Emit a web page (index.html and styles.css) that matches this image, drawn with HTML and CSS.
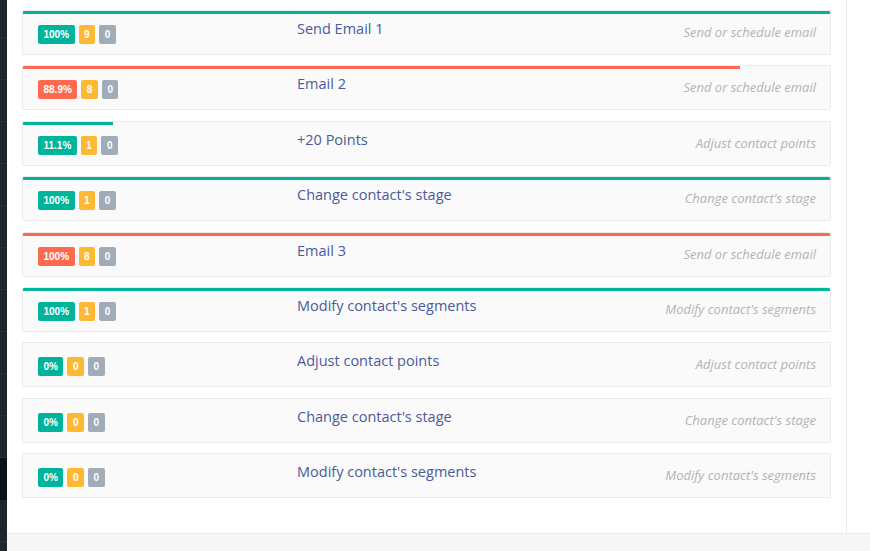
FILE: index.html
```html
<!DOCTYPE html>
<html>
<head>
<meta charset="utf-8">
<link rel="stylesheet" href="styles.css">
</head>
<body>
<div class="app">
  <nav class="sidebar">
    <div class="nav-item first"></div>
    <div class="nav-item"></div>
    <div class="nav-item"></div>
    <div class="nav-item"></div>
    <div class="nav-item"></div>
    <div class="nav-item"></div>
    <div class="nav-item"></div>
    <div class="nav-item"></div>
    <div class="nav-item"></div>
    <div class="nav-item"></div>
    <div class="nav-item"></div>
    <div class="nav-item active"></div>
    <div class="nav-item"></div>
  </nav>
  <div class="content">
    <div class="columns">
      <main class="panel">
        <div class="event">
          <div class="bar bar-success" style="width:100%"></div>
          <div class="event-body">
            <div class="labels"><span class="label success">100%</span><span class="label warning">9</span><span class="label gray">0</span></div>
            <div class="title">Send Email 1</div>
            <div class="desc">Send or schedule email</div>
          </div>
        </div>
        <div class="event">
          <div class="bar bar-danger" style="width:88.9%"></div>
          <div class="event-body">
            <div class="labels"><span class="label danger">88.9%</span><span class="label warning">8</span><span class="label gray">0</span></div>
            <div class="title">Email 2</div>
            <div class="desc">Send or schedule email</div>
          </div>
        </div>
        <div class="event">
          <div class="bar bar-success" style="width:11.1%"></div>
          <div class="event-body">
            <div class="labels"><span class="label success">11.1%</span><span class="label warning">1</span><span class="label gray">0</span></div>
            <div class="title">+20 Points</div>
            <div class="desc">Adjust contact points</div>
          </div>
        </div>
        <div class="event">
          <div class="bar bar-success" style="width:100%"></div>
          <div class="event-body">
            <div class="labels"><span class="label success">100%</span><span class="label warning">1</span><span class="label gray">0</span></div>
            <div class="title">Change contact's stage</div>
            <div class="desc">Change contact's stage</div>
          </div>
        </div>
        <div class="event">
          <div class="bar bar-danger" style="width:100%"></div>
          <div class="event-body">
            <div class="labels"><span class="label danger">100%</span><span class="label warning">8</span><span class="label gray">0</span></div>
            <div class="title">Email 3</div>
            <div class="desc">Send or schedule email</div>
          </div>
        </div>
        <div class="event">
          <div class="bar bar-success" style="width:100%"></div>
          <div class="event-body">
            <div class="labels"><span class="label success">100%</span><span class="label warning">1</span><span class="label gray">0</span></div>
            <div class="title">Modify contact's segments</div>
            <div class="desc">Modify contact's segments</div>
          </div>
        </div>
        <div class="event">
          <div class="bar" style="width:0%"></div>
          <div class="event-body">
            <div class="labels"><span class="label success">0%</span><span class="label warning">0</span><span class="label gray">0</span></div>
            <div class="title">Adjust contact points</div>
            <div class="desc">Adjust contact points</div>
          </div>
        </div>
        <div class="event">
          <div class="bar" style="width:0%"></div>
          <div class="event-body">
            <div class="labels"><span class="label success">0%</span><span class="label warning">0</span><span class="label gray">0</span></div>
            <div class="title">Change contact's stage</div>
            <div class="desc">Change contact's stage</div>
          </div>
        </div>
        <div class="event">
          <div class="bar" style="width:0%"></div>
          <div class="event-body">
            <div class="labels"><span class="label success">0%</span><span class="label warning">0</span><span class="label gray">0</span></div>
            <div class="title">Modify contact's segments</div>
            <div class="desc">Modify contact's segments</div>
          </div>
        </div>
      </main>
      <aside class="side"></aside>
    </div>
    <footer class="footer"></footer>
  </div>
</div>
</body>
</html>
```

FILE: styles.css
```css
* { box-sizing: border-box; }
html, body { margin: 0; padding: 0; height: 100%; background: #fff; }
body { font-family: "Open Sans", "Liberation Sans", sans-serif; overflow: hidden; }

.app { display: flex; height: 551px; }

.sidebar {
  width: 7px;
  flex: none;
  background: #1f252d;
  display: flex;
  flex-direction: column;
  overflow: hidden;
}
.nav-item {
  flex: none;
  height: 42px;
  border-bottom: 1px solid #2b323b;
}
.nav-item.first { height: 38px; }
.nav-item.active { background: #0e1317; border-bottom-color: #0e1317; }

.content {
  flex: 1;
  display: flex;
  flex-direction: column;
  min-width: 0;
}
.columns { display: flex; height: 533px; }
.panel {
  width: 840px;
  flex: none;
  border-right: 1px solid #ebebeb;
  padding: 10px 15px 0 15px;
}
.side { flex: 1; background: #fff; }

.footer {
  flex: 1;
  background: #f7f7f7;
  border-top: 1px solid #ebebeb;
}

.event {
  height: 45px;
  margin-bottom: 10.4px;
  background: #fafafa;
  border: 1px solid #ebebeb;
  border-radius: 2px;
  overflow: hidden;
}
.bar { height: 3px; }
.bar-success { background: #00b49c; }
.bar-danger { background: #fd6a50; }

.event-body {
  display: grid;
  grid-template-columns: 259px 1fr auto;
  padding: 0 14px 0 15px;
  align-items: start;
}
.labels {
  display: flex;
  gap: 4px;
  margin-top: 11px;
}
.label {
  display: inline-block;
  height: 19px;
  line-height: 19px;
  padding: 0 5.5px;
  border-radius: 2px;
  color: #fff;
  font-family: "Liberation Sans", Arial, sans-serif;
  font-weight: bold;
  font-size: 10px;
}
.label.success { background: #00b49c; }
.label.danger { background: #fd6a50; }
.label.warning { background: #fdb933; }
.label.gray { background: #a0acb8; }

.title {
  margin-top: 5px;
  font-size: 14.5px;
  line-height: 20px;
  color: #4a5a9a;
}
.desc {
  margin-top: 9px;
  font-size: 13px;
  line-height: 18px;
  font-style: italic;
  color: #b3b3b3;
  text-align: right;
}
```
